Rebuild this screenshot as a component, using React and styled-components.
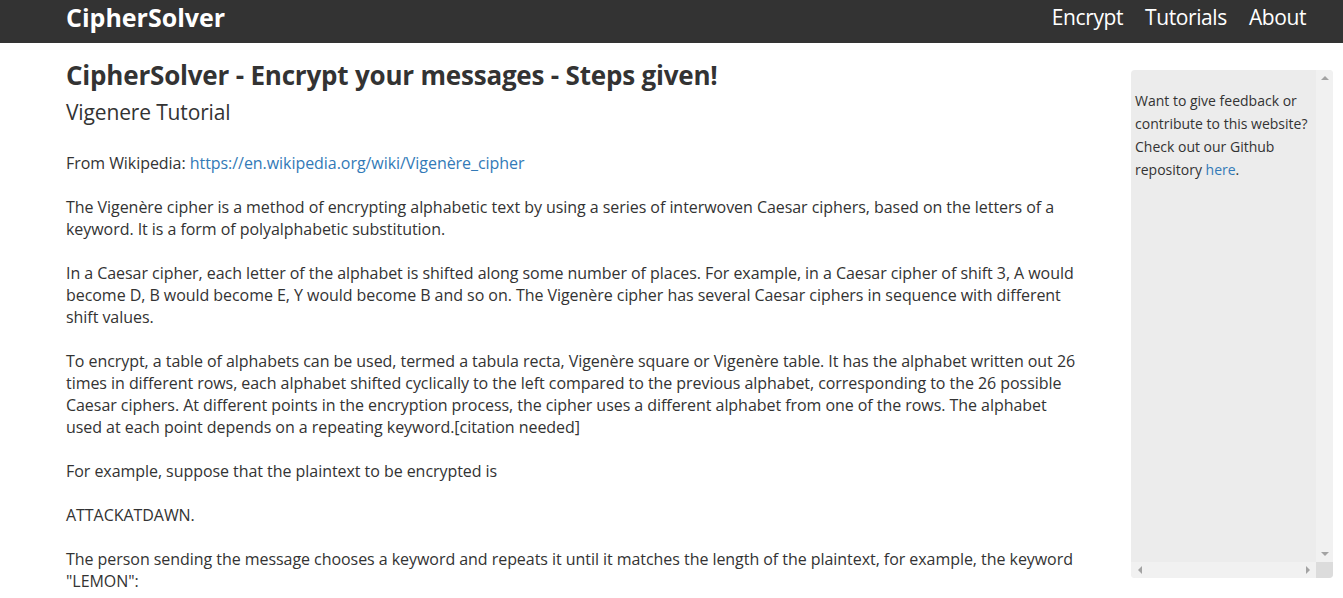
import React from "react";
import styled, { createGlobalStyle } from "styled-components";

const GlobalStyle = createGlobalStyle`
  html, body {
    margin: 0;
    padding: 0;
    background: #fff;
    font-family: "Open Sans", "DejaVu Sans", sans-serif;
    color: #333;
  }
  * {
    box-sizing: border-box;
  }
`;

const NavBar = styled.nav`
  height: 43px;
  background: #333;
  display: flex;
  align-items: center;
  justify-content: space-between;
  padding: 0 37px 9px 66px;
`;

const Brand = styled.a`
  color: #fff;
  font-size: 25px;
  font-weight: 700;
  text-decoration: none;
`;

const NavLinks = styled.div`
  display: flex;
  gap: 22px;
`;

const NavLink = styled.a`
  color: #fff;
  font-size: 21px;
  text-decoration: none;
  letter-spacing: -0.4px;
`;

const Page = styled.div`
  display: flex;
  align-items: flex-start;
  padding: 0 10px 0 66px;
`;

const Main = styled.main`
  width: 1012px;
  padding-top: 15px;
`;

const Title = styled.h1`
  margin: 0 0 5px;
  font-size: 26px;
  font-weight: 700;
  line-height: 34px;
  letter-spacing: -0.2px;
`;

const Subtitle = styled.h2`
  margin: 0 0 25px;
  font-size: 21px;
  font-weight: 400;
  line-height: 30px;
  letter-spacing: -0.15px;
`;

const Para = styled.p`
  margin: 0 0 22px;
  font-size: 16px;
  line-height: 22px;
  letter-spacing: -0.05px;
`;

const Link = styled.a`
  color: #337ab7;
  text-decoration: none;
`;

const Sidebar = styled.aside`
  margin-left: auto;
  margin-top: 27px;
  width: 202px;
  height: 508px;
  background: #ececec;
  border-radius: 4px;
  overflow: hidden;
  display: grid;
  grid-template-columns: 1fr 17px;
  grid-template-rows: 1fr 16px;
`;

const SideContent = styled.div`
  padding: 19px 4px;
  font-size: 14px;
  line-height: 23px;
`;

const VTrack = styled.div`
  background: #f1f1f1;
  display: flex;
  flex-direction: column;
  justify-content: space-between;
`;

const HTrack = styled.div`
  background: #f1f1f1;
  display: flex;
  justify-content: space-between;
`;

const Corner = styled.div`
  background: #dcdcdc;
`;

const ArrowButton = styled.div`
  width: 17px;
  height: 16px;
  display: flex;
  align-items: center;
  justify-content: center;
`;

const Triangle = styled.span`
  width: 0;
  height: 0;
  border: 4px solid transparent;
  ${({ $dir }) => $dir === "up" && "border-bottom-color: #a3a3a3; border-top-width: 0;"}
  ${({ $dir }) => $dir === "down" && "border-top-color: #a3a3a3; border-bottom-width: 0;"}
  ${({ $dir }) => $dir === "left" && "border-right-color: #a3a3a3; border-left-width: 0;"}
  ${({ $dir }) => $dir === "right" && "border-left-color: #a3a3a3; border-right-width: 0;"}
`;

const paragraphs = [
  "The Vigenère cipher is a method of encrypting alphabetic text by using a series of interwoven Caesar ciphers, based on the letters of a keyword. It is a form of polyalphabetic substitution.",
  "In a Caesar cipher, each letter of the alphabet is shifted along some number of places. For example, in a Caesar cipher of shift 3, A would become D, B would become E, Y would become B and so on. The Vigenère cipher has several Caesar ciphers in sequence with different shift values.",
  "To encrypt, a table of alphabets can be used, termed a tabula recta, Vigenère square or Vigenère table. It has the alphabet written out 26 times in different rows, each alphabet shifted cyclically to the left compared to the previous alphabet, corresponding to the 26 possible Caesar ciphers. At different points in the encryption process, the cipher uses a different alphabet from one of the rows. The alphabet used at each point depends on a repeating keyword.[citation needed]",
  "For example, suppose that the plaintext to be encrypted is",
  "ATTACKATDAWN.",
  "The person sending the message chooses a keyword and repeats it until it matches the length of the plaintext, for example, the keyword \"LEMON\":",
];

const App = () => {
  return (
    <>
      <GlobalStyle />
      <NavBar>
        <Brand href="#">CipherSolver</Brand>
        <NavLinks>
          <NavLink href="#">Encrypt</NavLink>
          <NavLink href="#">Tutorials</NavLink>
          <NavLink href="#">About</NavLink>
        </NavLinks>
      </NavBar>
      <Page>
        <Main>
          <Title>CipherSolver - Encrypt your messages - Steps given!</Title>
          <Subtitle>Vigenere Tutorial</Subtitle>
          <Para>
            From Wikipedia:{" "}
            <Link href="#">https://en.wikipedia.org/wiki/Vigenère_cipher</Link>
          </Para>
          {paragraphs.map((text, i) => (
            <Para key={i}>{text}</Para>
          ))}
        </Main>
        <Sidebar>
          <SideContent>
            Want to give feedback or contribute to this website? Check out our
            Github repository <Link href="#">here</Link>.
          </SideContent>
          <VTrack>
            <ArrowButton><Triangle $dir="up" /></ArrowButton>
            <ArrowButton><Triangle $dir="down" /></ArrowButton>
          </VTrack>
          <HTrack>
            <ArrowButton><Triangle $dir="left" /></ArrowButton>
            <ArrowButton><Triangle $dir="right" /></ArrowButton>
          </HTrack>
          <Corner />
        </Sidebar>
      </Page>
    </>
  );
};

export default App;
